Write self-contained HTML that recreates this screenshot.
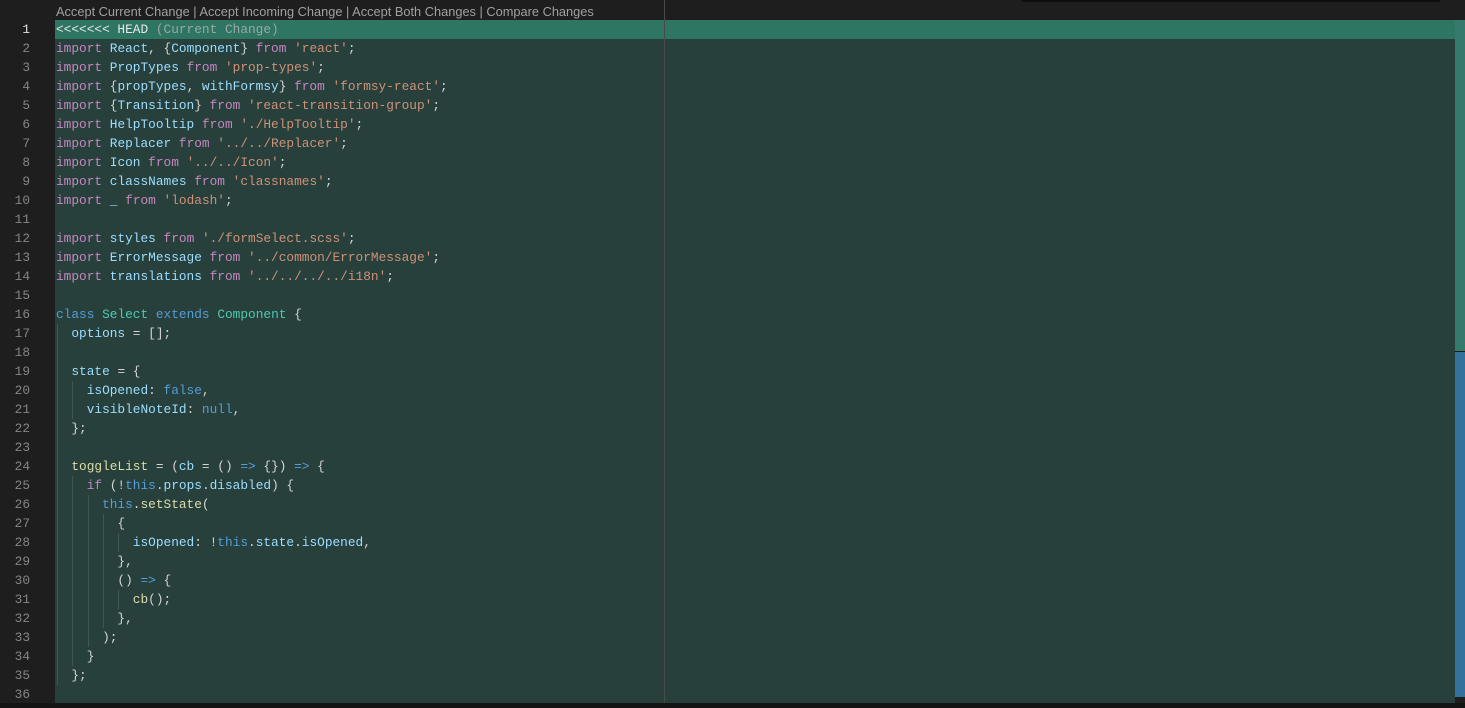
<!DOCTYPE html>
<html><head><meta charset="utf-8"><style>
body{margin:0;width:1465px;height:708px;background:#1e1e1e;overflow:hidden;position:relative;font-family:"Liberation Mono",monospace;}
.code{position:absolute;left:55px;top:20px;width:1400px;height:684px;background:#27403c;}
.hl{position:absolute;left:55px;top:20px;width:1400px;height:19px;background:#2e7564;}
.ln{position:absolute;left:0;width:30px;text-align:right;font-size:12.8px;line-height:19px;color:#858585;}
.l{position:absolute;left:56px;font-size:12.8px;line-height:19px;color:#d4d4d4;white-space:pre;}
.k{color:#c586c0}.v{color:#9cdcfe}.s{color:#ce9178}.b{color:#569cd6}.t{color:#4ec9b0}.f{color:#dcdcaa}
.lens{position:absolute;left:56px;top:4px;font-family:"Liberation Sans",sans-serif;font-size:12.8px;color:#a0a0a0;}
.ruler{position:absolute;left:664px;top:0;width:1px;height:704px;background:#4a4a4a;}
.sb1{position:absolute;left:1455px;top:20px;width:10px;height:331px;background:#357a6a;}
.sb2{position:absolute;left:1455px;top:352px;width:10px;height:345px;background:#33729a;}
.bot{position:absolute;left:0;top:703px;width:1465px;height:5px;background:#141414;}
.g{position:absolute;width:1px;background:#3f5753;}
.wid{position:absolute;left:1022px;top:0;width:418px;height:2px;background:#0e0e0e;}
</style></head><body>
<div class="code"></div>
<div class="hl"></div>
<div class="ruler"></div>
<div class="sb1"></div><div class="sb2"></div>
<div class="wid"></div>
<div class="lens">Accept Current Change | Accept Incoming Change | Accept Both Changes | Compare Changes</div>
<div class="g" style="left:57px;top:324px;height:361px"></div>
<div class="g" style="left:72px;top:381px;height:38px"></div>
<div class="g" style="left:72px;top:476px;height:190px"></div>
<div class="g" style="left:88px;top:495px;height:152px"></div>
<div class="g" style="left:103px;top:514px;height:114px"></div>
<div class="g" style="left:118px;top:533px;height:19px"></div>
<div class="g" style="left:118px;top:590px;height:19px"></div>
<div class="bot"></div>

<div class="ln" style="top:20px;color:#e0e0e0">1</div>
<div class="ln" style="top:39px">2</div><div class="ln" style="top:58px">3</div><div class="ln" style="top:77px">4</div><div class="ln" style="top:96px">5</div><div class="ln" style="top:115px">6</div><div class="ln" style="top:134px">7</div><div class="ln" style="top:153px">8</div><div class="ln" style="top:172px">9</div><div class="ln" style="top:191px">10</div><div class="ln" style="top:210px">11</div><div class="ln" style="top:229px">12</div><div class="ln" style="top:248px">13</div><div class="ln" style="top:267px">14</div><div class="ln" style="top:286px">15</div><div class="ln" style="top:305px">16</div><div class="ln" style="top:324px">17</div><div class="ln" style="top:343px">18</div><div class="ln" style="top:362px">19</div><div class="ln" style="top:381px">20</div><div class="ln" style="top:400px">21</div><div class="ln" style="top:419px">22</div><div class="ln" style="top:438px">23</div><div class="ln" style="top:457px">24</div><div class="ln" style="top:476px">25</div><div class="ln" style="top:495px">26</div><div class="ln" style="top:514px">27</div><div class="ln" style="top:533px">28</div><div class="ln" style="top:552px">29</div><div class="ln" style="top:571px">30</div><div class="ln" style="top:590px">31</div><div class="ln" style="top:609px">32</div><div class="ln" style="top:628px">33</div><div class="ln" style="top:647px">34</div><div class="ln" style="top:666px">35</div><div class="ln" style="top:685px">36</div>

<div class="l" style="top:20px"><span style="color:#e8e8e8">&lt;&lt;&lt;&lt;&lt;&lt;&lt; HEAD</span> <span style="color:#9aa8a2">(Current Change)</span></div>
<div class="l" style="top:39px"><span class="k">import</span> <span class="v">React</span>, {<span class="v">Component</span>} <span class="k">from</span> <span class="s">'react'</span>;</div>
<div class="l" style="top:58px"><span class="k">import</span> <span class="v">PropTypes</span> <span class="k">from</span> <span class="s">'prop-types'</span>;</div>
<div class="l" style="top:77px"><span class="k">import</span> {<span class="v">propTypes</span>, <span class="v">withFormsy</span>} <span class="k">from</span> <span class="s">'formsy-react'</span>;</div>
<div class="l" style="top:96px"><span class="k">import</span> {<span class="v">Transition</span>} <span class="k">from</span> <span class="s">'react-transition-group'</span>;</div>
<div class="l" style="top:115px"><span class="k">import</span> <span class="v">HelpTooltip</span> <span class="k">from</span> <span class="s">'./HelpTooltip'</span>;</div>
<div class="l" style="top:134px"><span class="k">import</span> <span class="v">Replacer</span> <span class="k">from</span> <span class="s">'../../Replacer'</span>;</div>
<div class="l" style="top:153px"><span class="k">import</span> <span class="v">Icon</span> <span class="k">from</span> <span class="s">'../../Icon'</span>;</div>
<div class="l" style="top:172px"><span class="k">import</span> <span class="v">classNames</span> <span class="k">from</span> <span class="s">'classnames'</span>;</div>
<div class="l" style="top:191px"><span class="k">import</span> <span class="v">_</span> <span class="k">from</span> <span class="s">'lodash'</span>;</div>
<div class="l" style="top:229px"><span class="k">import</span> <span class="v">styles</span> <span class="k">from</span> <span class="s">'./formSelect.scss'</span>;</div>
<div class="l" style="top:248px"><span class="k">import</span> <span class="v">ErrorMessage</span> <span class="k">from</span> <span class="s">'../common/ErrorMessage'</span>;</div>
<div class="l" style="top:267px"><span class="k">import</span> <span class="v">translations</span> <span class="k">from</span> <span class="s">'../../../../i18n'</span>;</div>
<div class="l" style="top:305px"><span class="b">class</span> <span class="t">Select</span> <span class="b">extends</span> <span class="t">Component</span> {</div>
<div class="l" style="top:324px">  <span class="v">options</span> = [];</div>
<div class="l" style="top:362px">  <span class="v">state</span> = {</div>
<div class="l" style="top:381px">    <span class="v">isOpened</span>: <span class="b">false</span>,</div>
<div class="l" style="top:400px">    <span class="v">visibleNoteId</span>: <span class="b">null</span>,</div>
<div class="l" style="top:419px">  };</div>
<div class="l" style="top:457px">  <span class="f">toggleList</span> = (<span class="v">cb</span> = () <span class="b">=&gt;</span> {}) <span class="b">=&gt;</span> {</div>
<div class="l" style="top:476px">    <span class="k">if</span> (!<span class="b">this</span>.<span class="v">props</span>.<span class="v">disabled</span>) {</div>
<div class="l" style="top:495px">      <span class="b">this</span>.<span class="f">setState</span>(</div>
<div class="l" style="top:514px">        {</div>
<div class="l" style="top:533px">          <span class="v">isOpened</span>: !<span class="b">this</span>.<span class="v">state</span>.<span class="v">isOpened</span>,</div>
<div class="l" style="top:552px">        },</div>
<div class="l" style="top:571px">        () <span class="b">=&gt;</span> {</div>
<div class="l" style="top:590px">          <span class="f">cb</span>();</div>
<div class="l" style="top:609px">        },</div>
<div class="l" style="top:628px">      );</div>
<div class="l" style="top:647px">    }</div>
<div class="l" style="top:666px">  };</div>
</body></html>
